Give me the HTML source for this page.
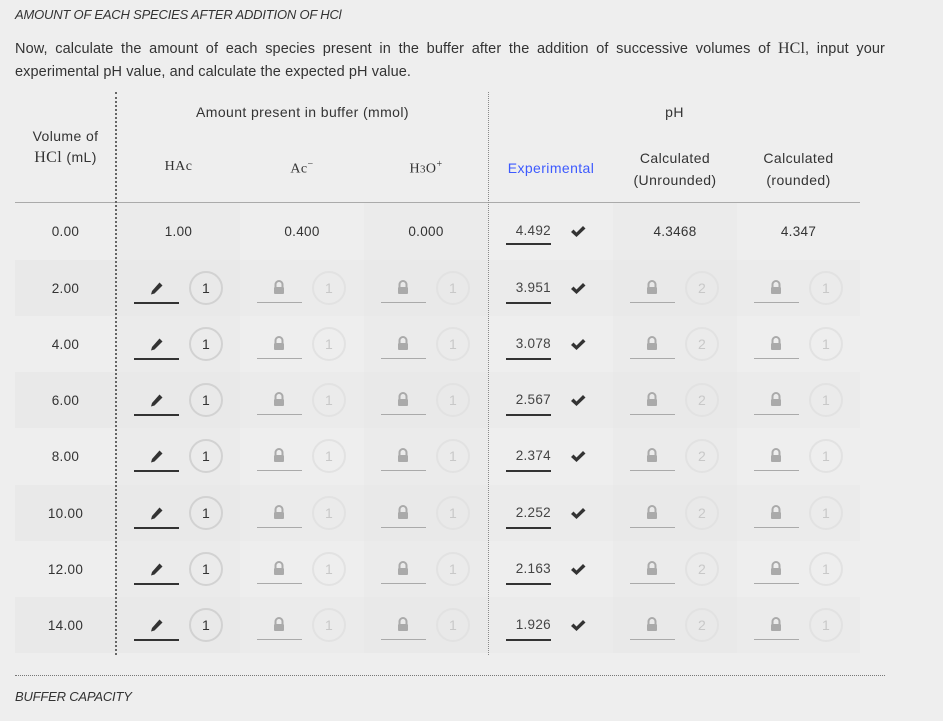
<!DOCTYPE html>
<html><head><meta charset="utf-8"><style>
*{margin:0;padding:0;box-sizing:border-box}
body{width:943px;height:721px;background:#eeeeee;font-family:"Liberation Sans",sans-serif;color:#333;position:relative;overflow:hidden}
.a{position:absolute}
h4{position:absolute;left:15px;top:7px;font-size:13px;font-style:italic;font-weight:normal;color:#333;letter-spacing:-0.2px}
p.t{position:absolute;left:15px;top:37px;width:870px;font-size:14.5px;line-height:23px;color:#333;letter-spacing:0.1px}
p.t span{display:block}
p.t .j{text-align:justify;text-align-last:justify}
.serif{font-family:"Liberation Serif",serif;font-size:16px}
.hd{position:absolute;font-size:14px;letter-spacing:0.4px;text-align:center;color:#333}
.row{position:absolute;left:15px;width:845px}
.c{position:absolute;top:0;height:100%;font-size:13.5px;letter-spacing:0.3px}
.num{display:flex;align-items:center;justify-content:center}
.ul{position:absolute;left:17px;width:45px;height:2px;background:#333}
.ul.l{height:1px;background:#aaa}
.circ{position:absolute;left:72px;width:34px;height:34px;border-radius:50%;border:2px solid #d2d2d2;display:flex;align-items:center;justify-content:center;font-size:14px;color:#333}
.circ.l{border-color:#e2e2e2;color:#c8c8c8}
.ic{position:absolute;left:32px}
.val{position:absolute;left:12px;width:50px;text-align:right;font-size:13.5px;color:#444}
.chk{position:absolute;left:81px}
</style></head><body>
<h4>AMOUNT OF EACH SPECIES AFTER ADDITION OF HCl</h4>
<p class="t"><span class="j">Now, calculate the amount of each species present in the buffer after the addition of successive volumes of <span class="serif" style="display:inline">HCl</span>, input your</span><span>experimental pH value, and calculate the expected pH value.</span></p>

<div class="hd" style="left:117px;width:371px;top:104px">Amount present in buffer (mmol)</div>
<div class="hd" style="left:489px;width:371px;top:104px">pH</div>
<div class="hd" style="left:15px;width:101px;top:126px;line-height:21px">Volume of<br><span class="serif">HCl</span> (mL)</div>
<div class="hd serif" style="left:117px;width:123px;top:159px">HAc</div>
<div class="hd serif" style="left:240px;width:124px;top:159px">Ac<sup style="font-size:10px">−</sup></div>
<div class="hd serif" style="left:364px;width:124px;top:159px">H<span style="font-size:11px">3</span>O<sup style="font-size:10px">+</sup></div>
<div class="hd" style="left:489px;width:124px;top:160px;color:#3d5afe">Experimental</div>
<div class="hd" style="left:613px;width:124px;top:147px;line-height:22px">Calculated<br>(Unrounded)</div>
<div class="hd" style="left:737px;width:123px;top:147px;line-height:22px">Calculated<br>(rounded)</div>
<div class="a" style="left:15px;top:202px;width:845px;height:1px;background:#aaa"></div>

<!-- row 0 -->
<div class="row" style="top:203px;height:57px">
<div class="c num" style="left:0;width:101px;background:#eeeeee">0.00</div>
<div class="c num" style="left:102px;width:123px;background:#ebebeb">1.00</div>
<div class="c num" style="left:225px;width:124px;background:#eeeeee">0.400</div>
<div class="c num" style="left:349px;width:124px;background:#ebebeb">0.000</div>
<div class="c" style="left:474px;width:124px;background:#eeeeee"><span class="val" style="top:20px">4.492</span><div class="ul" style="top:40px"></div><svg class="chk" style="top:22px" width="16" height="13" viewBox="0 0 16 13"><path d="M1 7l2.5-2.5L6.5 7.5 13 1l2.5 2.5L6.5 12z" fill="#333"/></svg></div>
<div class="c num" style="left:598px;width:124px;background:#ebebeb">4.3468</div>
<div class="c num" style="left:722px;width:123px;background:#eeeeee">4.347</div>
</div>

<div class="row" style="top:260px;height:56px"><div class="c num" style="left:0;width:101px;background:#e9e9e9">2.00</div><div class="c" style="left:102px;width:123px;background:#e9e9e9"><svg class="ic" style="top:21px" width="15" height="15" viewBox="0 0 15 15"><path d="M10.5 1.5l3 3-8 8-3.5 1 1-3.5z" fill="#333"/></svg><div class="ul" style="top:42px"></div><div class="circ" style="top:11px">1</div></div><div class="c" style="left:225px;width:124px;background:#ebebeb"><svg class="ic" style="top:19px" width="14" height="16" viewBox="0 0 14 16"><path d="M3.5 8V5.5a3.5 3.5 0 0 1 7 0V8" fill="none" stroke="#aaa" stroke-width="2"/><rect x="2" y="8" width="10" height="7" rx="1" fill="#aaa"/></svg><div class="ul l" style="top:42px"></div><div class="circ l" style="top:11px">1</div></div><div class="c" style="left:349px;width:124px;background:#e9e9e9"><svg class="ic" style="top:19px" width="14" height="16" viewBox="0 0 14 16"><path d="M3.5 8V5.5a3.5 3.5 0 0 1 7 0V8" fill="none" stroke="#aaa" stroke-width="2"/><rect x="2" y="8" width="10" height="7" rx="1" fill="#aaa"/></svg><div class="ul l" style="top:42px"></div><div class="circ l" style="top:11px">1</div></div><div class="c" style="left:474px;width:124px;background:#ebebeb"><span class="val" style="top:20px">3.951</span><div class="ul" style="top:42px"></div><svg class="chk" style="top:22px" width="16" height="13" viewBox="0 0 16 13"><path d="M1 7l2.5-2.5L6.5 7.5 13 1l2.5 2.5L6.5 12z" fill="#333"/></svg></div><div class="c" style="left:598px;width:124px;background:#e9e9e9"><svg class="ic" style="top:19px" width="14" height="16" viewBox="0 0 14 16"><path d="M3.5 8V5.5a3.5 3.5 0 0 1 7 0V8" fill="none" stroke="#aaa" stroke-width="2"/><rect x="2" y="8" width="10" height="7" rx="1" fill="#aaa"/></svg><div class="ul l" style="top:42px"></div><div class="circ l" style="top:11px">2</div></div><div class="c" style="left:722px;width:123px;background:#ebebeb"><svg class="ic" style="top:19px" width="14" height="16" viewBox="0 0 14 16"><path d="M3.5 8V5.5a3.5 3.5 0 0 1 7 0V8" fill="none" stroke="#aaa" stroke-width="2"/><rect x="2" y="8" width="10" height="7" rx="1" fill="#aaa"/></svg><div class="ul l" style="top:42px"></div><div class="circ l" style="top:11px">1</div></div></div>

<div class="row" style="top:316px;height:56px"><div class="c num" style="left:0;width:101px;background:#eeeeee">4.00</div><div class="c" style="left:102px;width:123px;background:#ebebeb"><svg class="ic" style="top:21px" width="15" height="15" viewBox="0 0 15 15"><path d="M10.5 1.5l3 3-8 8-3.5 1 1-3.5z" fill="#333"/></svg><div class="ul" style="top:42px"></div><div class="circ" style="top:11px">1</div></div><div class="c" style="left:225px;width:124px;background:#eeeeee"><svg class="ic" style="top:19px" width="14" height="16" viewBox="0 0 14 16"><path d="M3.5 8V5.5a3.5 3.5 0 0 1 7 0V8" fill="none" stroke="#aaa" stroke-width="2"/><rect x="2" y="8" width="10" height="7" rx="1" fill="#aaa"/></svg><div class="ul l" style="top:42px"></div><div class="circ l" style="top:11px">1</div></div><div class="c" style="left:349px;width:124px;background:#ebebeb"><svg class="ic" style="top:19px" width="14" height="16" viewBox="0 0 14 16"><path d="M3.5 8V5.5a3.5 3.5 0 0 1 7 0V8" fill="none" stroke="#aaa" stroke-width="2"/><rect x="2" y="8" width="10" height="7" rx="1" fill="#aaa"/></svg><div class="ul l" style="top:42px"></div><div class="circ l" style="top:11px">1</div></div><div class="c" style="left:474px;width:124px;background:#eeeeee"><span class="val" style="top:20px">3.078</span><div class="ul" style="top:42px"></div><svg class="chk" style="top:22px" width="16" height="13" viewBox="0 0 16 13"><path d="M1 7l2.5-2.5L6.5 7.5 13 1l2.5 2.5L6.5 12z" fill="#333"/></svg></div><div class="c" style="left:598px;width:124px;background:#ebebeb"><svg class="ic" style="top:19px" width="14" height="16" viewBox="0 0 14 16"><path d="M3.5 8V5.5a3.5 3.5 0 0 1 7 0V8" fill="none" stroke="#aaa" stroke-width="2"/><rect x="2" y="8" width="10" height="7" rx="1" fill="#aaa"/></svg><div class="ul l" style="top:42px"></div><div class="circ l" style="top:11px">2</div></div><div class="c" style="left:722px;width:123px;background:#eeeeee"><svg class="ic" style="top:19px" width="14" height="16" viewBox="0 0 14 16"><path d="M3.5 8V5.5a3.5 3.5 0 0 1 7 0V8" fill="none" stroke="#aaa" stroke-width="2"/><rect x="2" y="8" width="10" height="7" rx="1" fill="#aaa"/></svg><div class="ul l" style="top:42px"></div><div class="circ l" style="top:11px">1</div></div></div>

<div class="row" style="top:372px;height:56px"><div class="c num" style="left:0;width:101px;background:#e9e9e9">6.00</div><div class="c" style="left:102px;width:123px;background:#e9e9e9"><svg class="ic" style="top:21px" width="15" height="15" viewBox="0 0 15 15"><path d="M10.5 1.5l3 3-8 8-3.5 1 1-3.5z" fill="#333"/></svg><div class="ul" style="top:42px"></div><div class="circ" style="top:11px">1</div></div><div class="c" style="left:225px;width:124px;background:#ebebeb"><svg class="ic" style="top:19px" width="14" height="16" viewBox="0 0 14 16"><path d="M3.5 8V5.5a3.5 3.5 0 0 1 7 0V8" fill="none" stroke="#aaa" stroke-width="2"/><rect x="2" y="8" width="10" height="7" rx="1" fill="#aaa"/></svg><div class="ul l" style="top:42px"></div><div class="circ l" style="top:11px">1</div></div><div class="c" style="left:349px;width:124px;background:#e9e9e9"><svg class="ic" style="top:19px" width="14" height="16" viewBox="0 0 14 16"><path d="M3.5 8V5.5a3.5 3.5 0 0 1 7 0V8" fill="none" stroke="#aaa" stroke-width="2"/><rect x="2" y="8" width="10" height="7" rx="1" fill="#aaa"/></svg><div class="ul l" style="top:42px"></div><div class="circ l" style="top:11px">1</div></div><div class="c" style="left:474px;width:124px;background:#ebebeb"><span class="val" style="top:20px">2.567</span><div class="ul" style="top:42px"></div><svg class="chk" style="top:22px" width="16" height="13" viewBox="0 0 16 13"><path d="M1 7l2.5-2.5L6.5 7.5 13 1l2.5 2.5L6.5 12z" fill="#333"/></svg></div><div class="c" style="left:598px;width:124px;background:#e9e9e9"><svg class="ic" style="top:19px" width="14" height="16" viewBox="0 0 14 16"><path d="M3.5 8V5.5a3.5 3.5 0 0 1 7 0V8" fill="none" stroke="#aaa" stroke-width="2"/><rect x="2" y="8" width="10" height="7" rx="1" fill="#aaa"/></svg><div class="ul l" style="top:42px"></div><div class="circ l" style="top:11px">2</div></div><div class="c" style="left:722px;width:123px;background:#ebebeb"><svg class="ic" style="top:19px" width="14" height="16" viewBox="0 0 14 16"><path d="M3.5 8V5.5a3.5 3.5 0 0 1 7 0V8" fill="none" stroke="#aaa" stroke-width="2"/><rect x="2" y="8" width="10" height="7" rx="1" fill="#aaa"/></svg><div class="ul l" style="top:42px"></div><div class="circ l" style="top:11px">1</div></div></div>

<div class="row" style="top:428px;height:57px"><div class="c num" style="left:0;width:101px;background:#eeeeee">8.00</div><div class="c" style="left:102px;width:123px;background:#ebebeb"><svg class="ic" style="top:21px" width="15" height="15" viewBox="0 0 15 15"><path d="M10.5 1.5l3 3-8 8-3.5 1 1-3.5z" fill="#333"/></svg><div class="ul" style="top:42px"></div><div class="circ" style="top:11px">1</div></div><div class="c" style="left:225px;width:124px;background:#eeeeee"><svg class="ic" style="top:19px" width="14" height="16" viewBox="0 0 14 16"><path d="M3.5 8V5.5a3.5 3.5 0 0 1 7 0V8" fill="none" stroke="#aaa" stroke-width="2"/><rect x="2" y="8" width="10" height="7" rx="1" fill="#aaa"/></svg><div class="ul l" style="top:42px"></div><div class="circ l" style="top:11px">1</div></div><div class="c" style="left:349px;width:124px;background:#ebebeb"><svg class="ic" style="top:19px" width="14" height="16" viewBox="0 0 14 16"><path d="M3.5 8V5.5a3.5 3.5 0 0 1 7 0V8" fill="none" stroke="#aaa" stroke-width="2"/><rect x="2" y="8" width="10" height="7" rx="1" fill="#aaa"/></svg><div class="ul l" style="top:42px"></div><div class="circ l" style="top:11px">1</div></div><div class="c" style="left:474px;width:124px;background:#eeeeee"><span class="val" style="top:20px">2.374</span><div class="ul" style="top:42px"></div><svg class="chk" style="top:22px" width="16" height="13" viewBox="0 0 16 13"><path d="M1 7l2.5-2.5L6.5 7.5 13 1l2.5 2.5L6.5 12z" fill="#333"/></svg></div><div class="c" style="left:598px;width:124px;background:#ebebeb"><svg class="ic" style="top:19px" width="14" height="16" viewBox="0 0 14 16"><path d="M3.5 8V5.5a3.5 3.5 0 0 1 7 0V8" fill="none" stroke="#aaa" stroke-width="2"/><rect x="2" y="8" width="10" height="7" rx="1" fill="#aaa"/></svg><div class="ul l" style="top:42px"></div><div class="circ l" style="top:11px">2</div></div><div class="c" style="left:722px;width:123px;background:#eeeeee"><svg class="ic" style="top:19px" width="14" height="16" viewBox="0 0 14 16"><path d="M3.5 8V5.5a3.5 3.5 0 0 1 7 0V8" fill="none" stroke="#aaa" stroke-width="2"/><rect x="2" y="8" width="10" height="7" rx="1" fill="#aaa"/></svg><div class="ul l" style="top:42px"></div><div class="circ l" style="top:11px">1</div></div></div>

<div class="row" style="top:485px;height:56px"><div class="c num" style="left:0;width:101px;background:#e9e9e9">10.00</div><div class="c" style="left:102px;width:123px;background:#e9e9e9"><svg class="ic" style="top:21px" width="15" height="15" viewBox="0 0 15 15"><path d="M10.5 1.5l3 3-8 8-3.5 1 1-3.5z" fill="#333"/></svg><div class="ul" style="top:42px"></div><div class="circ" style="top:11px">1</div></div><div class="c" style="left:225px;width:124px;background:#ebebeb"><svg class="ic" style="top:19px" width="14" height="16" viewBox="0 0 14 16"><path d="M3.5 8V5.5a3.5 3.5 0 0 1 7 0V8" fill="none" stroke="#aaa" stroke-width="2"/><rect x="2" y="8" width="10" height="7" rx="1" fill="#aaa"/></svg><div class="ul l" style="top:42px"></div><div class="circ l" style="top:11px">1</div></div><div class="c" style="left:349px;width:124px;background:#e9e9e9"><svg class="ic" style="top:19px" width="14" height="16" viewBox="0 0 14 16"><path d="M3.5 8V5.5a3.5 3.5 0 0 1 7 0V8" fill="none" stroke="#aaa" stroke-width="2"/><rect x="2" y="8" width="10" height="7" rx="1" fill="#aaa"/></svg><div class="ul l" style="top:42px"></div><div class="circ l" style="top:11px">1</div></div><div class="c" style="left:474px;width:124px;background:#ebebeb"><span class="val" style="top:20px">2.252</span><div class="ul" style="top:42px"></div><svg class="chk" style="top:22px" width="16" height="13" viewBox="0 0 16 13"><path d="M1 7l2.5-2.5L6.5 7.5 13 1l2.5 2.5L6.5 12z" fill="#333"/></svg></div><div class="c" style="left:598px;width:124px;background:#e9e9e9"><svg class="ic" style="top:19px" width="14" height="16" viewBox="0 0 14 16"><path d="M3.5 8V5.5a3.5 3.5 0 0 1 7 0V8" fill="none" stroke="#aaa" stroke-width="2"/><rect x="2" y="8" width="10" height="7" rx="1" fill="#aaa"/></svg><div class="ul l" style="top:42px"></div><div class="circ l" style="top:11px">2</div></div><div class="c" style="left:722px;width:123px;background:#ebebeb"><svg class="ic" style="top:19px" width="14" height="16" viewBox="0 0 14 16"><path d="M3.5 8V5.5a3.5 3.5 0 0 1 7 0V8" fill="none" stroke="#aaa" stroke-width="2"/><rect x="2" y="8" width="10" height="7" rx="1" fill="#aaa"/></svg><div class="ul l" style="top:42px"></div><div class="circ l" style="top:11px">1</div></div></div>

<div class="row" style="top:541px;height:56px"><div class="c num" style="left:0;width:101px;background:#eeeeee">12.00</div><div class="c" style="left:102px;width:123px;background:#ebebeb"><svg class="ic" style="top:21px" width="15" height="15" viewBox="0 0 15 15"><path d="M10.5 1.5l3 3-8 8-3.5 1 1-3.5z" fill="#333"/></svg><div class="ul" style="top:42px"></div><div class="circ" style="top:11px">1</div></div><div class="c" style="left:225px;width:124px;background:#eeeeee"><svg class="ic" style="top:19px" width="14" height="16" viewBox="0 0 14 16"><path d="M3.5 8V5.5a3.5 3.5 0 0 1 7 0V8" fill="none" stroke="#aaa" stroke-width="2"/><rect x="2" y="8" width="10" height="7" rx="1" fill="#aaa"/></svg><div class="ul l" style="top:42px"></div><div class="circ l" style="top:11px">1</div></div><div class="c" style="left:349px;width:124px;background:#ebebeb"><svg class="ic" style="top:19px" width="14" height="16" viewBox="0 0 14 16"><path d="M3.5 8V5.5a3.5 3.5 0 0 1 7 0V8" fill="none" stroke="#aaa" stroke-width="2"/><rect x="2" y="8" width="10" height="7" rx="1" fill="#aaa"/></svg><div class="ul l" style="top:42px"></div><div class="circ l" style="top:11px">1</div></div><div class="c" style="left:474px;width:124px;background:#eeeeee"><span class="val" style="top:20px">2.163</span><div class="ul" style="top:42px"></div><svg class="chk" style="top:22px" width="16" height="13" viewBox="0 0 16 13"><path d="M1 7l2.5-2.5L6.5 7.5 13 1l2.5 2.5L6.5 12z" fill="#333"/></svg></div><div class="c" style="left:598px;width:124px;background:#ebebeb"><svg class="ic" style="top:19px" width="14" height="16" viewBox="0 0 14 16"><path d="M3.5 8V5.5a3.5 3.5 0 0 1 7 0V8" fill="none" stroke="#aaa" stroke-width="2"/><rect x="2" y="8" width="10" height="7" rx="1" fill="#aaa"/></svg><div class="ul l" style="top:42px"></div><div class="circ l" style="top:11px">2</div></div><div class="c" style="left:722px;width:123px;background:#eeeeee"><svg class="ic" style="top:19px" width="14" height="16" viewBox="0 0 14 16"><path d="M3.5 8V5.5a3.5 3.5 0 0 1 7 0V8" fill="none" stroke="#aaa" stroke-width="2"/><rect x="2" y="8" width="10" height="7" rx="1" fill="#aaa"/></svg><div class="ul l" style="top:42px"></div><div class="circ l" style="top:11px">1</div></div></div>

<div class="row" style="top:597px;height:56px"><div class="c num" style="left:0;width:101px;background:#e9e9e9">14.00</div><div class="c" style="left:102px;width:123px;background:#e9e9e9"><svg class="ic" style="top:21px" width="15" height="15" viewBox="0 0 15 15"><path d="M10.5 1.5l3 3-8 8-3.5 1 1-3.5z" fill="#333"/></svg><div class="ul" style="top:42px"></div><div class="circ" style="top:11px">1</div></div><div class="c" style="left:225px;width:124px;background:#ebebeb"><svg class="ic" style="top:19px" width="14" height="16" viewBox="0 0 14 16"><path d="M3.5 8V5.5a3.5 3.5 0 0 1 7 0V8" fill="none" stroke="#aaa" stroke-width="2"/><rect x="2" y="8" width="10" height="7" rx="1" fill="#aaa"/></svg><div class="ul l" style="top:42px"></div><div class="circ l" style="top:11px">1</div></div><div class="c" style="left:349px;width:124px;background:#e9e9e9"><svg class="ic" style="top:19px" width="14" height="16" viewBox="0 0 14 16"><path d="M3.5 8V5.5a3.5 3.5 0 0 1 7 0V8" fill="none" stroke="#aaa" stroke-width="2"/><rect x="2" y="8" width="10" height="7" rx="1" fill="#aaa"/></svg><div class="ul l" style="top:42px"></div><div class="circ l" style="top:11px">1</div></div><div class="c" style="left:474px;width:124px;background:#ebebeb"><span class="val" style="top:20px">1.926</span><div class="ul" style="top:42px"></div><svg class="chk" style="top:22px" width="16" height="13" viewBox="0 0 16 13"><path d="M1 7l2.5-2.5L6.5 7.5 13 1l2.5 2.5L6.5 12z" fill="#333"/></svg></div><div class="c" style="left:598px;width:124px;background:#e9e9e9"><svg class="ic" style="top:19px" width="14" height="16" viewBox="0 0 14 16"><path d="M3.5 8V5.5a3.5 3.5 0 0 1 7 0V8" fill="none" stroke="#aaa" stroke-width="2"/><rect x="2" y="8" width="10" height="7" rx="1" fill="#aaa"/></svg><div class="ul l" style="top:42px"></div><div class="circ l" style="top:11px">2</div></div><div class="c" style="left:722px;width:123px;background:#ebebeb"><svg class="ic" style="top:19px" width="14" height="16" viewBox="0 0 14 16"><path d="M3.5 8V5.5a3.5 3.5 0 0 1 7 0V8" fill="none" stroke="#aaa" stroke-width="2"/><rect x="2" y="8" width="10" height="7" rx="1" fill="#aaa"/></svg><div class="ul l" style="top:42px"></div><div class="circ l" style="top:11px">1</div></div></div>

<div class="a" style="left:115px;top:92px;height:563px;border-left:2px dotted #666"></div>
<div class="a" style="left:488px;top:92px;height:563px;border-left:1px dotted #888"></div>
<div class="a" style="left:15px;top:675px;width:870px;border-top:1px dotted #777"></div>
<div class="a" style="left:15px;top:689px;font-size:13px;font-style:italic;letter-spacing:-0.2px">BUFFER CAPACITY</div>
</body></html>
